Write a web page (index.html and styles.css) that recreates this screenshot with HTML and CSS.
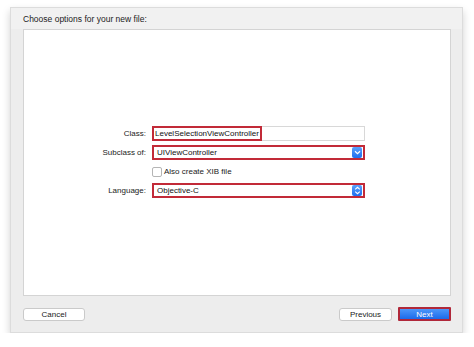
FILE: index.html
```html
<!DOCTYPE html>
<html lang="en">
<head>
    <meta charset="UTF-8">
    <title>Choose options for your new file</title>
    <link rel="stylesheet" href="styles.css">
</head>
<body>
    <div class="dialog">
        <div class="title">Choose options for your new file:</div>

        <div class="panel">
            <div class="form">
                <label class="label">Class:</label>
                <div class="field">
                    <span class="mark">LevelSelectionViewController</span>
                </div>

                <label class="label">Subclass of:</label>
                <div class="popup marked">
                    <span class="value">UIViewController</span>
                    <span class="arrow">
                        <svg width="7" height="5" viewBox="0 0 7 5"><path d="M1 1.2 L3.5 3.6 L6 1.2" fill="none" stroke="#fff" stroke-width="1.2"/></svg>
                    </span>
                </div>

                <span></span>
                <div class="check">
                    <span class="box"></span>
                    <span>Also create XIB file</span>
                </div>

                <label class="label">Language:</label>
                <div class="popup marked">
                    <span class="value">Objective-C</span>
                    <span class="arrow">
                        <svg width="7" height="9" viewBox="0 0 7 9"><path d="M1.2 3.4 L3.5 1.3 L5.8 3.4 M1.2 5.6 L3.5 7.7 L5.8 5.6" fill="none" stroke="#fff" stroke-width="1.1"/></svg>
                    </span>
                </div>
            </div>
        </div>

        <div class="footer">
            <button class="btn">Cancel</button>
            <div class="right">
                <button class="btn prev">Previous</button>
                <button class="btn primary">Next</button>
            </div>
        </div>
    </div>
</body>
</html>
```

FILE: styles.css
```css
body {
    margin: 0;
    background-color: #ffffff;
    font-family: "Liberation Sans", Arial, sans-serif;
    font-size: 8px;
    color: #222;
}
.dialog {
    width: 453px;
    height: 326px;
    margin: 7px 0 0 10px;
    box-sizing: border-box;
    background-color: #ededed;
    border: 1px solid #dcdcdc;
    box-shadow: 0 4px 8px rgba(0,0,0,0.18);
    display: flex;
    flex-direction: column;
}
.title {
    height: 21px;
    padding: 6px 0 0 12px;
    box-sizing: border-box;
    background-color: #f1f1f1;
    font-size: 8.5px;
}
.panel {
    margin-left: 12px;
    width: 428px;
    height: 267px;
    box-sizing: border-box;
    background-color: #fff;
    border: 1px solid #d4d4d4;
}
.form {
    display: grid;
    grid-template-columns: 122px 213px;
    grid-auto-rows: 15px;
    column-gap: 6px;
    row-gap: 4px;
    padding-top: 96px;
}
.label {
    display: flex;
    align-items: center;
    justify-content: flex-end;
}
.field {
    display: flex;
    border: 1px solid #d8d8d8;
    background: #fff;
}
.mark {
    display: flex;
    align-items: center;
    padding: 0 1px;
    margin: -1px;
    border: 2px solid #c22a38;
    color: #111;
}
.popup {
    display: flex;
    align-items: center;
    background: #fff;
    border: 1px solid #cfcfcf;
    box-sizing: border-box;
}
.popup.marked {
    border: 2px solid #c22a38;
}
.popup .value {
    flex: 1;
    padding-left: 3px;
    color: #111;
}
.arrow {
    width: 10px;
    height: 11px;
    margin-right: 1px;
    border-radius: 2px;
    background: linear-gradient(#5aa0fb, #1f6ff0);
    display: flex;
    align-items: center;
    justify-content: center;
}
.check {
    display: flex;
    align-items: center;
    gap: 2px;
}
.box {
    width: 8px;
    height: 8px;
    border: 1px solid #b5b5b5;
    border-radius: 2px;
    background: #fff;
}
.footer {
    display: flex;
    justify-content: space-between;
    padding: 12px 11px 0 12px;
}
.right {
    display: flex;
    gap: 6px;
}
.btn {
    height: 13px;
    width: 62px;
    padding: 0;
    font-family: "Liberation Sans", Arial, sans-serif;
    font-size: 8px;
    color: #222;
    background: #fff;
    border: 1px solid #cacaca;
    border-radius: 3px;
}
.prev {
    width: 53px;
}
.primary {
    width: 53px;
    height: 14px;
    margin-top: -1px;
    color: #fff;
    border: 2px solid #b0283a;
    border-radius: 1px;
    background: linear-gradient(#4c97fa, #1b6aeb);
}
```
